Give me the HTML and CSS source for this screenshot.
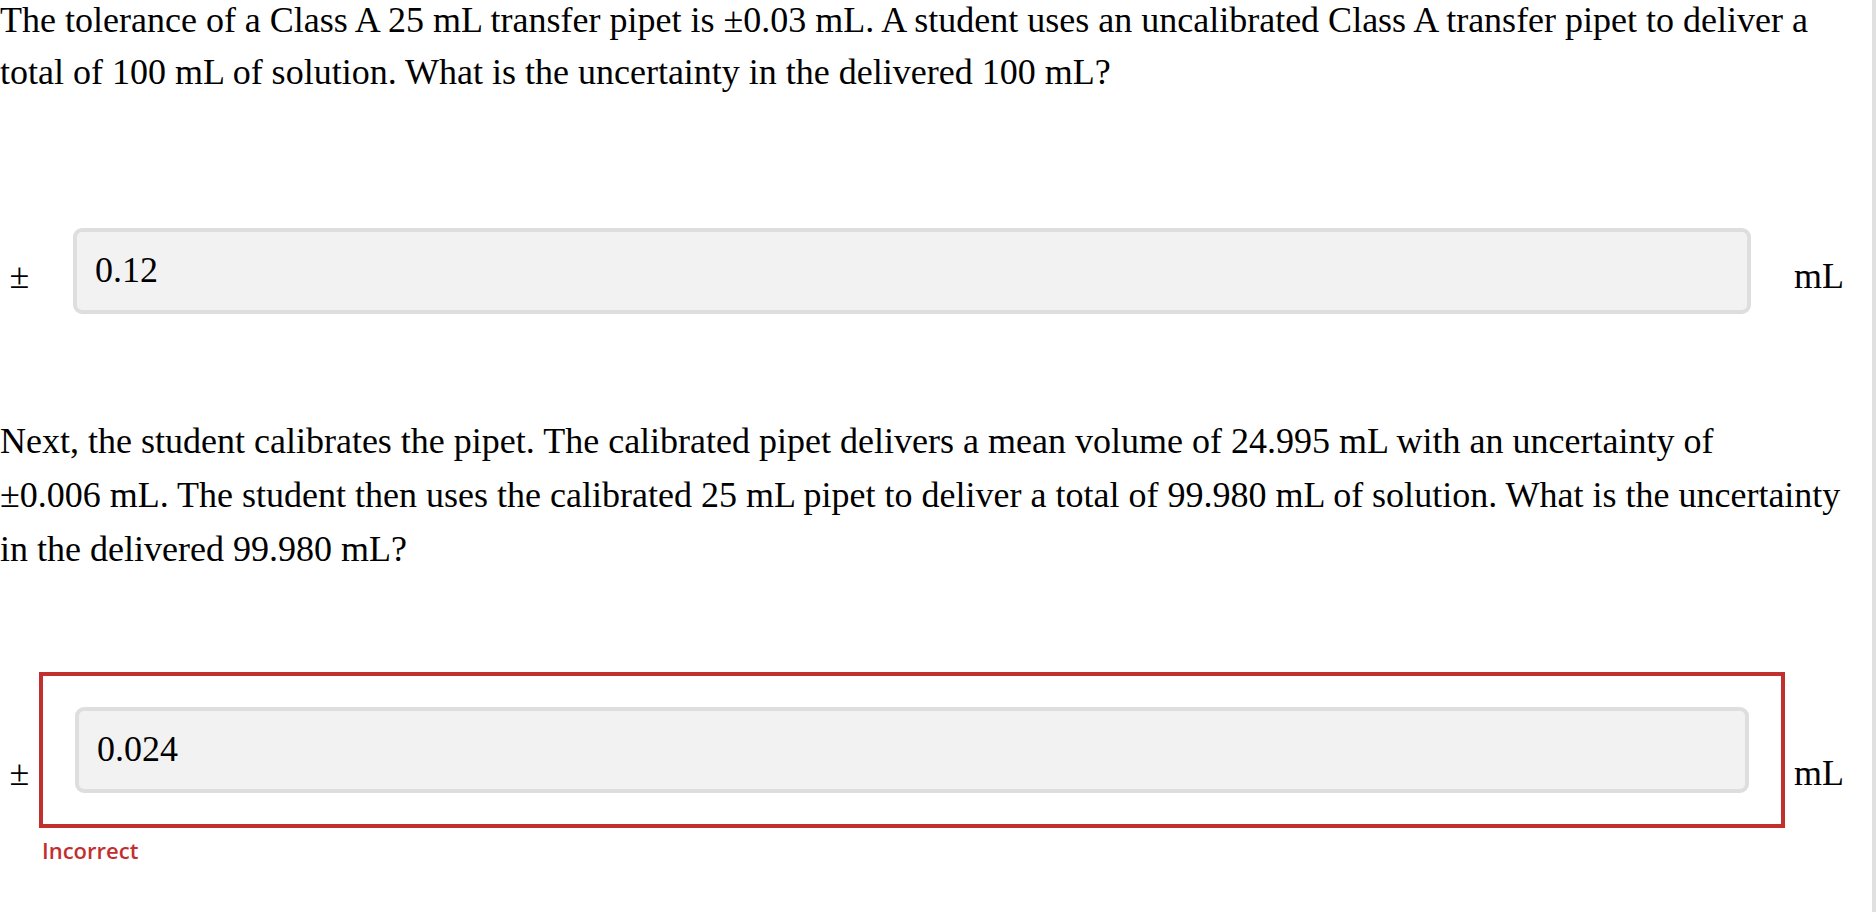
FILE: index.html
```html
<!DOCTYPE html>
<html lang="en">
<head>
<meta charset="utf-8">
<title>Pipet uncertainty</title>
<link rel="stylesheet" href="styles.css">
</head>
<body>
<div class="page">
  <p class="q q1">The tolerance of a Class A 25 mL transfer pipet is ±0.03 mL. A student uses an uncalibrated Class A transfer pipet to deliver a<br>total of 100 mL of solution. What is the uncertainty in the delivered 100 mL?</p>

  <div class="answer-row row1">
    <span class="pm">±</span>
    <div class="field">
      <div class="field-box">
        <input class="field-input" type="text" value="0.12">
      </div>
      <div class="field-spacer"></div>
    </div>
    <span class="unit">mL</span>
  </div>

  <p class="q q2">Next, the student calibrates the pipet. The calibrated pipet delivers a mean volume of 24.995 mL with an uncertainty of<br>±0.006 mL. The student then uses the calibrated 25 mL pipet to deliver a total of 99.980 mL of solution. What is the uncertainty<br>in the delivered 99.980 mL?</p>

  <div class="answer-row row2">
    <span class="pm">±</span>
    <div class="field">
      <div class="field-box is-incorrect">
        <input class="field-input" type="text" value="0.024">
      </div>
      <div class="feedback">Incorrect</div>
    </div>
    <span class="unit">mL</span>
  </div>
</div>
</body>
</html>
```
FILE: styles.css
```css
html, body {
  margin: 0;
  padding: 0;
  background: #ffffff;
}

body {
  font-family: "Liberation Serif", "Times New Roman", serif;
  font-size: 36px;
  color: #000000;
  overflow: hidden;
}

.page {
  box-sizing: border-box;
  width: 1876px;
  height: 912px;
  border-right: 4px solid #e0e0e0;
  overflow: hidden;
}

.q {
  margin: 0;
  white-space: nowrap;
}

.q1 {
  line-height: 52px;
  margin-top: -6px;
}

.q2 {
  line-height: 54px;
  margin-top: 54px;
}

.answer-row {
  display: grid;
  grid-template-columns: 39px 1fr auto;
  align-items: center;
}

.row1 {
  margin-top: 94px;
}

.row2 {
  margin-top: 96px;
}

.pm {
  text-align: center;
  line-height: 52px;
}

.unit {
  line-height: 52px;
  padding: 0 28px 0 9px;
}

.field-box {
  border: 4px solid transparent;
  padding: 32px 30px;
}

.field-box.is-incorrect {
  border-color: #c22f2f;
  padding: 31px 32px;
}

.field-input {
  display: block;
  box-sizing: border-box;
  width: 100%;
  height: 86px;
  margin: 0;
  padding: 17px 18px 20px;
  border: 4px solid #dedede;
  border-radius: 9px;
  background: #f2f2f2;
  font-family: "Liberation Serif", "Times New Roman", serif;
  font-size: 36px;
  line-height: 41px;
  color: #000000;
  outline: none;
}

.field-spacer {
  height: 10px;
}

.feedback {
  font-family: "Open Sans", "Liberation Sans", sans-serif;
  font-weight: 600;
  font-size: 22px;
  line-height: 35px;
  color: #c22f2f;
  margin-top: 5px;
  padding: 0 0 5px 3px;
}
```
